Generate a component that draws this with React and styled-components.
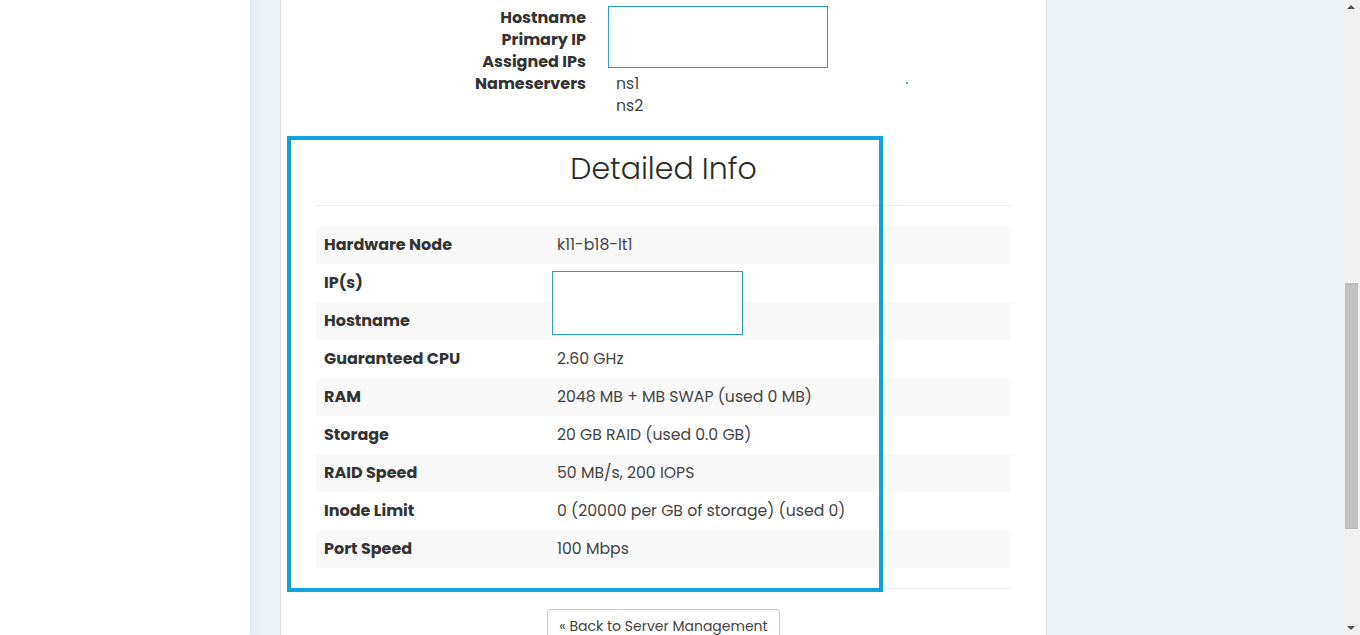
import React from "react"
import styled, { createGlobalStyle } from "styled-components"

const GlobalStyle = createGlobalStyle`
  html, body {
    margin: 0;
    padding: 0;
    height: 100%;
    overflow: hidden;
  }
  body {
    font-family: "Poppins", Inter, "Noto Sans", sans-serif;
    color: #333;
    background: #fff;
  }
`

const Layout = styled.div`
  display: flex;
  height: 635px;
`

const Sidebar = styled.aside`
  width: 250px;
  flex-shrink: 0;
  background: #fff;
`

const Main = styled.main`
  flex: 1;
  background: linear-gradient(to right, #e4eef2 0px, #ebf3f7 12px, #ebf3f7 100%);
  padding: 0 0 0 30px;
`

const Panel = styled.section`
  width: 767px;
  height: 100%;
  background: #fff;
  border-left: 1px solid #d6dce2;
  border-right: 1px solid #d6dce2;
  padding: 7px 35px 0;
  box-sizing: border-box;
`

const Summary = styled.div`
  position: relative;
  display: grid;
  grid-template-columns: 270px 1fr;
  column-gap: 30px;
  font-size: 15.7px;
  line-height: 22px;
`

const SumLabel = styled.div`
  text-align: right;
  font-weight: 700;
  font-size: 16px;
  color: #333;
`

const SumValue = styled.div`
  color: #444;
  min-height: 22px;
`

const Redacted = styled.div`
  position: absolute;
  left: ${p => p.$left}px;
  top: ${p => p.$top}px;
  width: ${p => p.$w}px;
  height: ${p => p.$h}px;
  background: #fff;
  border: 1px solid #2b9ccc;
  box-sizing: border-box;
`

const Dot = styled.span`
  position: absolute;
  left: 590px;
  top: 75px;
  width: 2px;
  height: 2px;
  background: #3aa9c4;
`

const Details = styled.div`
  position: relative;
  margin-top: 30px;
`

const Heading = styled.h2`
  margin: 0;
  padding: 1px 0 15px;
  text-align: center;
  font-size: 30px;
  font-weight: 300;
  line-height: 42px;
  color: #2b2b2b;
  border-bottom: 1px solid #eee;
`

const Table = styled.div`
  margin-top: 20px;
  font-size: 15.7px;
`

const Row = styled.div`
  display: grid;
  grid-template-columns: 233px 1fr;
  height: 38px;
  align-items: center;
  padding-left: 8px;
  background: ${p => (p.$shaded ? "#f9f9f9" : "#fff")};
`

const Label = styled.div`
  font-weight: 700;
  font-size: 16px;
  color: #333;
  margin-top: -1px;
`

const Value = styled.div`
  color: #444;
  margin-top: -1px;
`

const Rule = styled.hr`
  margin: 20px 0 0;
  border: 0;
  border-top: 1px solid #eee;
`

const Highlight = styled.div`
  position: absolute;
  left: -29px;
  top: -11px;
  width: 596px;
  height: 456px;
  border: 4px solid #10a3da;
  box-sizing: border-box;
  pointer-events: none;
`

const Actions = styled.div`
  display: flex;
  justify-content: center;
  padding-top: 20px;
`

const BackButton = styled.button`
  font-family: inherit;
  font-size: 14px;
  color: #444;
  background: #fff;
  border: 1px solid #ccc;
  border-radius: 3px;
  padding: 6px 11px;
  line-height: 20px;
  cursor: pointer;
`

const Scrollbar = styled.div`
  position: fixed;
  top: 0;
  right: 0;
  width: 17px;
  height: 100%;
  background: #f1f1f1;
`

const Arrow = styled.span`
  position: absolute;
  left: 4px;
  ${p => (p.$down ? "bottom: 5px;" : "top: 5px;")}
  width: 0;
  height: 0;
  border-left: 4px solid transparent;
  border-right: 4px solid transparent;
  ${p => (p.$down ? "border-top: 4px solid #505050;" : "border-bottom: 4px solid #505050;")}
`

const Thumb = styled.div`
  position: absolute;
  left: 2px;
  top: 283px;
  width: 13px;
  height: 246px;
  background: #c1c1c1;
`

const rows = [
  ["Hardware Node", "k11-b18-lt1"],
  ["IP(s)", ""],
  ["Hostname", ""],
  ["Guaranteed CPU", "2.60 GHz"],
  ["RAM", "2048 MB + MB SWAP (used 0 MB)"],
  ["Storage", "20 GB RAID (used 0.0 GB)"],
  ["RAID Speed", "50 MB/s, 200 IOPS"],
  ["Inode Limit", "0 (20000 per GB of storage) (used 0)"],
  ["Port Speed", "100 Mbps"],
]

export default function App() {
  return (
    <>
      <GlobalStyle />
      <Layout>
        <Sidebar />
        <Main>
          <Panel>
            <Summary>
              <SumLabel>Hostname</SumLabel>
              <SumValue />
              <SumLabel>Primary IP</SumLabel>
              <SumValue />
              <SumLabel>Assigned IPs</SumLabel>
              <SumValue />
              <SumLabel>Nameservers</SumLabel>
              <SumValue>
                ns1
                <br />
                ns2
              </SumValue>
              <Redacted $left={292} $top={-1} $w={220} $h={62} />
              <Dot />
            </Summary>

            <Details>
              <Heading>Detailed Info</Heading>
              <Table>
                {rows.map(([label, value], i) => (
                  <Row key={label} $shaded={i % 2 === 0}>
                    <Label>{label}</Label>
                    <Value>{value}</Value>
                  </Row>
                ))}
              </Table>
              <Rule />
              <Redacted $left={236} $top={124} $w={191} $h={64} />
              <Highlight />
            </Details>

            <Actions>
              <BackButton>« Back to Server Management</BackButton>
            </Actions>
          </Panel>
        </Main>
      </Layout>
      <Scrollbar>
        <Arrow />
        <Thumb />
        <Arrow $down />
      </Scrollbar>
    </>
  )
}
